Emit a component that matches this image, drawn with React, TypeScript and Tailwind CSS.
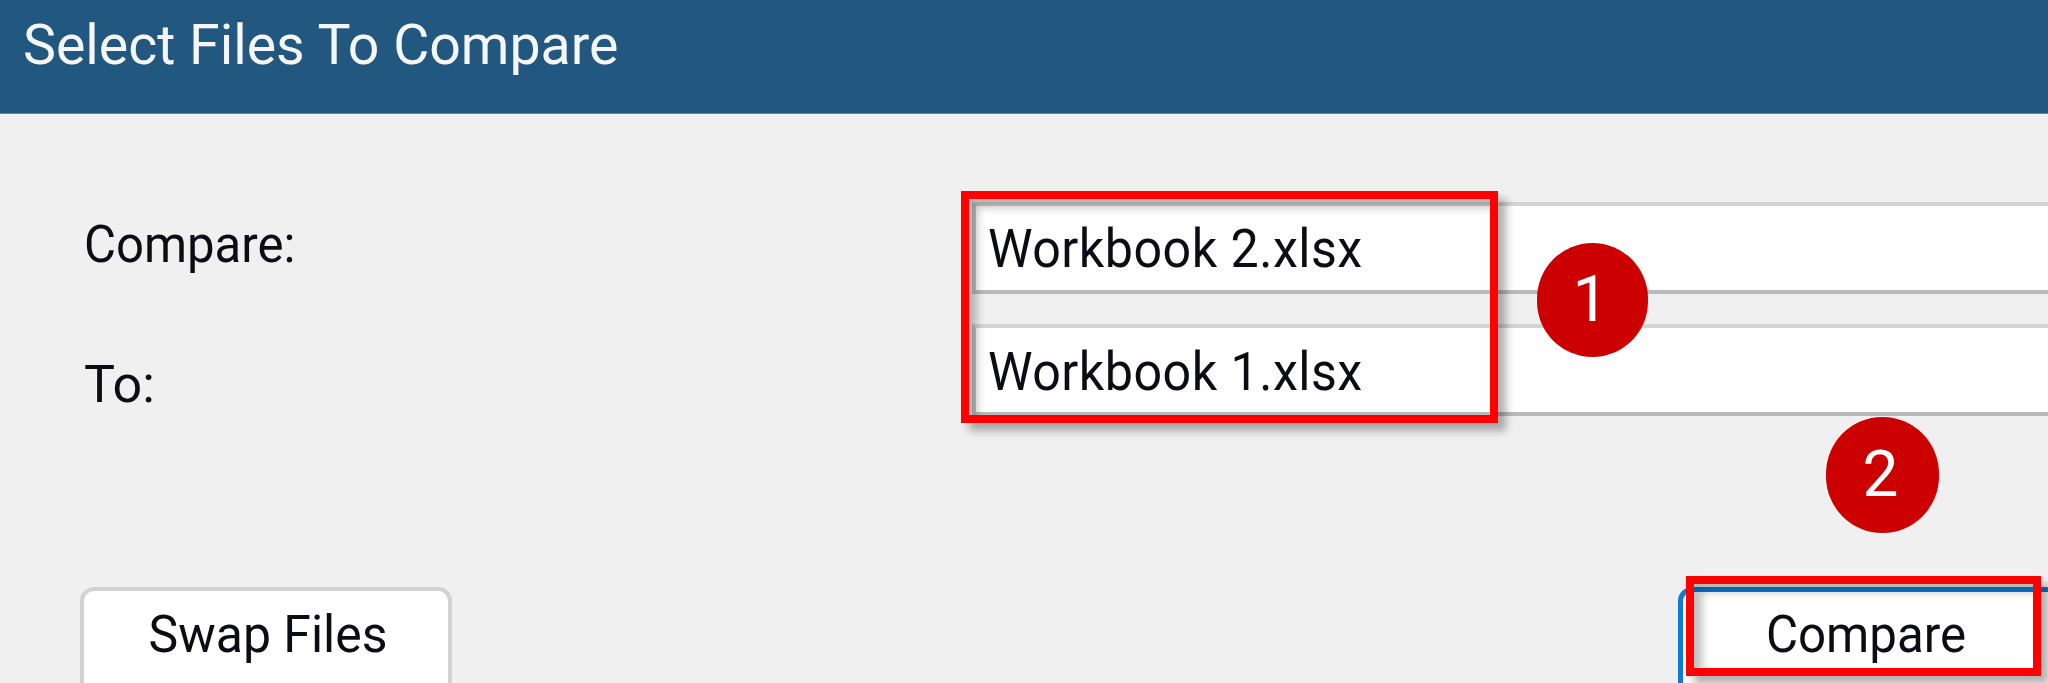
export default function App() {
  const font = "font-['Roboto','Liberation_Sans',sans-serif]";
  return (
    <div className={`relative w-[2048px] h-[683px] overflow-hidden bg-[#f0f0f0] text-[#0c0c14] ${font}`}>
      <header className="h-[114px] pl-[23px] bg-[#22577f] border-b border-[#5f8aa8] text-white">
        <div className="text-[56px] leading-[90px] origin-left scale-x-[0.99] text-[#f4f6f8] whitespace-nowrap">Select Files To Compare</div>
      </header>

      <main className="pt-[88px]">
        <div className="grid grid-cols-[972px_1fr] items-start h-[92px]">
          <label className="block pl-[84px] pt-[8px] text-[52px] leading-[70px]">
            <span className="block origin-left scale-x-[0.944]">Compare:</span>
          </label>
          <div className="h-[92px] bg-[#fefefe] border-l-4 border-t-4 border-b-4 border-l-[#c4c4c4] border-t-[#d3d3d3] border-b-[#b9b9b9] pl-[12px] text-[54px] leading-[85px] tracking-[0.5px]">
            <span className="block origin-left scale-x-[0.93]">Workbook 2.xlsx</span>
          </div>
        </div>
        <div className="grid grid-cols-[972px_1fr] items-start h-[92px] mt-[30px]">
          <label className="block pl-[84px] pt-[26px] text-[52px] leading-[70px]">
            <span className="block">To:</span>
          </label>
          <div className="h-[92px] bg-[#fefefe] border-l-4 border-t-4 border-b-4 border-l-[#c4c4c4] border-t-[#d3d3d3] border-b-[#b9b9b9] pl-[12px] text-[54px] leading-[87px] tracking-[0.5px]">
            <span className="block origin-left scale-x-[0.93]">Workbook 1.xlsx</span>
          </div>
        </div>

        <div className="flex justify-between mt-[171px] pl-[80px]">
          <button className="w-[372px] h-[112px] shrink-0 rounded-[14px] bg-white border-4 border-[#d2d2d2] text-[52px] pb-[16px] pl-[4px]">
            <span className="block scale-x-[0.96]">Swap Files</span>
          </button>
          <button className="w-[390px] h-[112px] shrink-0 -mr-[20px] rounded-[14px] bg-white border-[5px] border-[#0c7cd5] text-[52px] pb-[16px] pr-[14px]">
            <span className="block scale-x-[0.947]">Compare</span>
          </button>
        </div>
      </main>

      <div className="absolute left-[961px] top-[191px] w-[537px] h-[232px] border-[8px] border-[#ff0000] shadow-[8px_8px_8px_rgba(0,0,0,0.3),inset_8px_8px_8px_rgba(0,0,0,0.25)]" />
      <div className="absolute left-[1686px] top-[576px] w-[355px] h-[100px] border-[8px] border-[#ff0000] shadow-[8px_8px_8px_rgba(0,0,0,0.3),inset_8px_8px_8px_rgba(0,0,0,0.25)]" />

      <div className="absolute left-[1537px] top-[243px] w-[111px] h-[114px] rounded-full bg-[#cc0000] text-white text-[64px] pr-[4px] flex items-center justify-center">1</div>
      <div className="absolute left-[1826px] top-[417px] w-[113px] h-[116px] rounded-full bg-[#cc0000] text-white text-[64px] pr-[4px] flex items-center justify-center">2</div>
    </div>
  );
}
